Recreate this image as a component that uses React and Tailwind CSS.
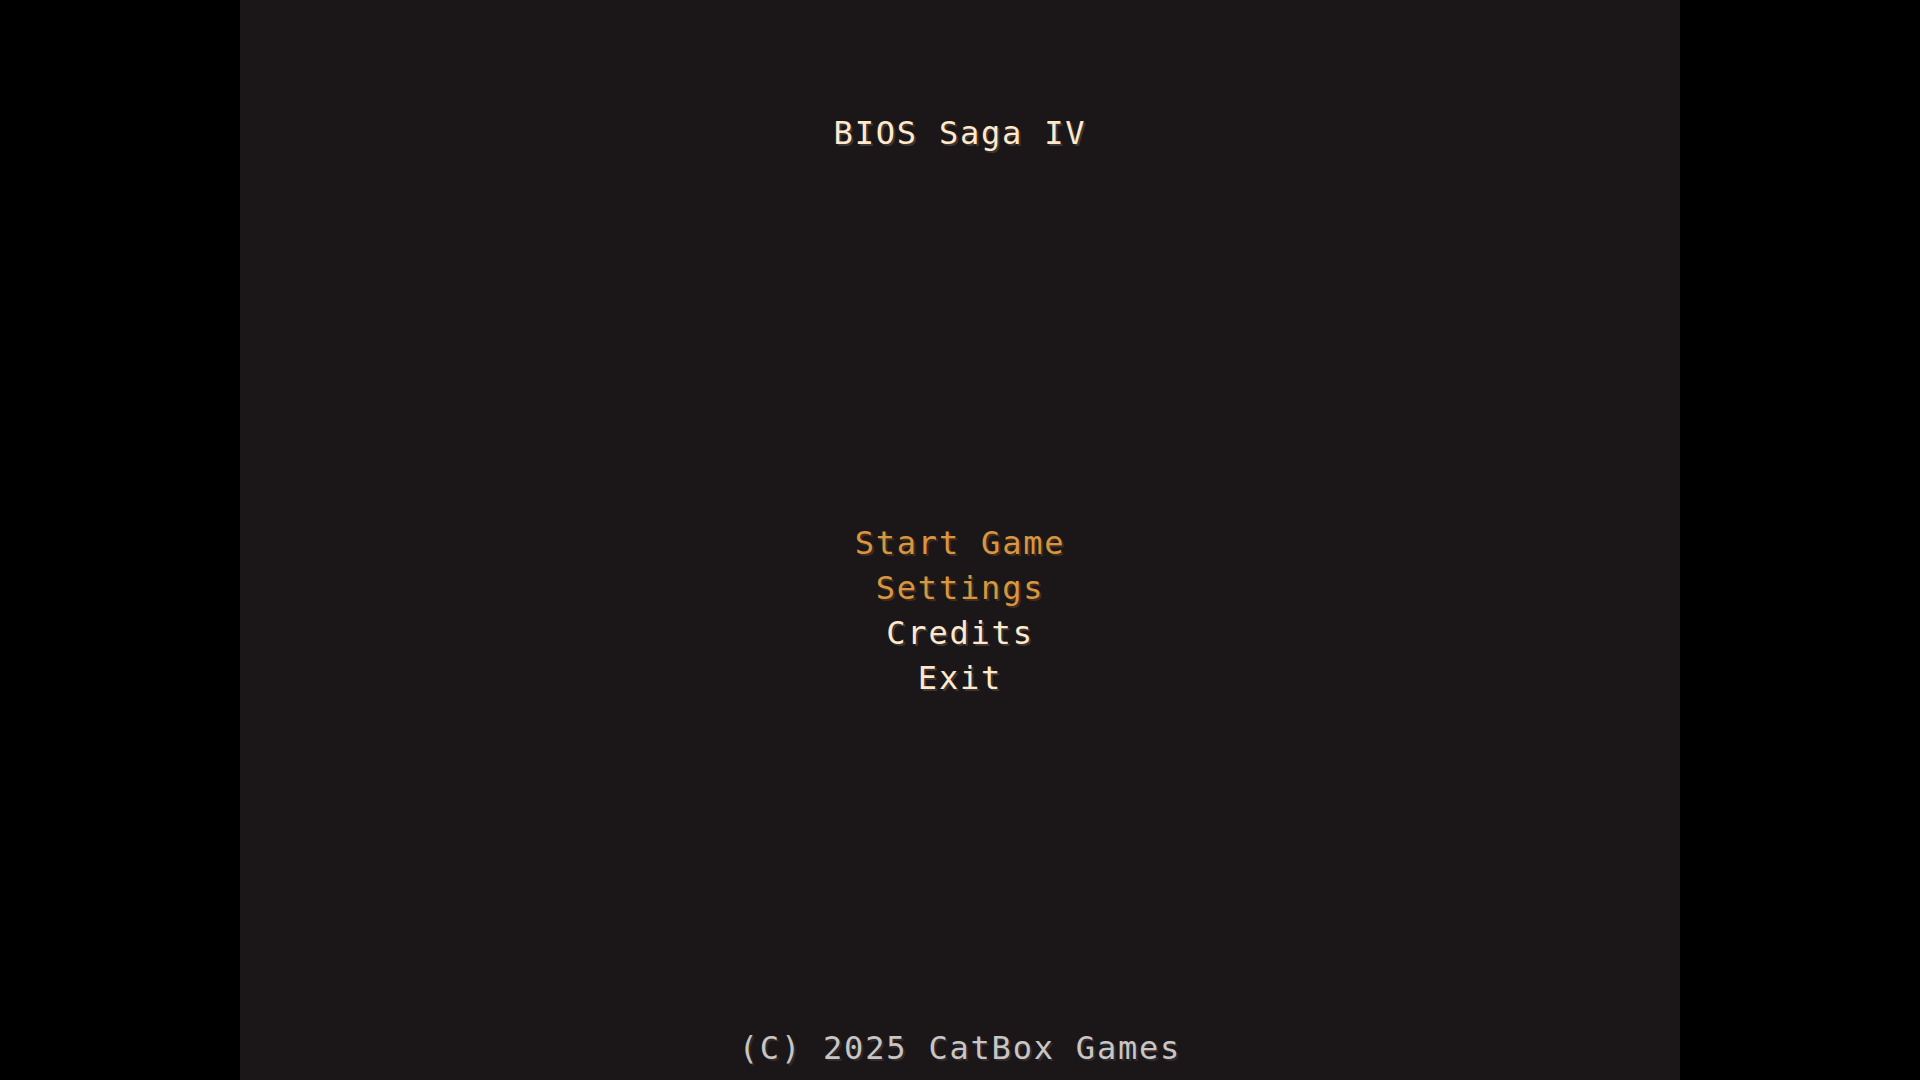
import React from 'react';

const menuItems = [
  { label: 'Start Game', active: true },
  { label: 'Settings', active: true },
  { label: 'Credits', active: false },
  { label: 'Exit', active: false },
];

const App = () => {
  return (
    <div className="w-full h-screen bg-black flex justify-center overflow-hidden">
      <div
        className="w-[1440px] h-[1080px] bg-[#1b1719] flex flex-col items-center text-[32px] leading-[45px] tracking-[1.8px]"
        style={{ fontFamily: '"DejaVu Sans Mono", "Liberation Mono", monospace' }}
      >
        {/* Title */}
        <h1 className="mt-[111px] text-[#ffe8cc] [text-shadow:2px_2px_0_#3d3531]">BIOS Saga IV</h1>

        {/* Main menu */}
        <ul className="mt-[365px] flex flex-col items-center">
          {menuItems.map((item) => (
            <li
              key={item.label}
              className={`h-[45px] ${
                item.active
                  ? 'text-[#d9963f] [text-shadow:2px_2px_0_#3f2c1f]'
                  : 'text-[#ffe8cc] [text-shadow:2px_2px_0_#3d3531]'
              }`}
            >
              {item.label}
            </li>
          ))}
        </ul>

        {/* Footer */}
        <footer className="mt-auto mb-[9px] text-[#c9c5c5] [text-shadow:2px_2px_0_#2f2a2b]">
          (C) 2025 CatBox Games
        </footer>
      </div>
    </div>
  );
};

export default App;
